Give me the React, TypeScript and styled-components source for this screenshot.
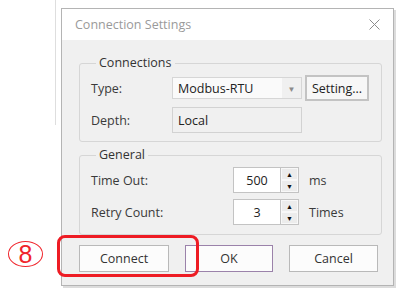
import { createGlobalStyle, styled } from 'styled-components';

const GlobalStyle = createGlobalStyle`
    html, body {
        margin: 0;
        padding: 0;
        background: #ffffff;
    }
    body {
        font-family: "Open Sans", "Liberation Sans", sans-serif;
        font-size: 12px;
        color: #333333;
    }
`;

const Page = styled.div`
    width: 400px;
    height: 290px;
    display: flex;
    flex-direction: row;
    overflow: hidden;
`;

const Side = styled.div`
    width: 61px;
    display: flex;
    flex-direction: column;
`;

const BackEdge = styled.div`
    width: 55px;
    height: 125px;
    border-right: 1px solid #dedede;
`;

const StepBadge = styled.span`
    margin: 116px 0 0 8px;
    width: 33px;
    height: 24px;
    border: 1.5px solid #f0252c;
    border-radius: 50%;
    color: #f0252c;
    font-family: "Liberation Sans", sans-serif;
    font-size: 25px;
    line-height: 24px;
    text-align: center;
`;

const Dialog = styled.div`
    margin-top: 8px;
    width: 331px;
    height: 276px;
    border: 1px solid #b4b4b4;
    box-shadow: 2px 2px 0 #dcdcdc;
    display: flex;
    flex-direction: column;
    background: #f0f0f0;
`;

const TitleBar = styled.div`
    height: 31px;
    background: #ffffff;
    display: flex;
    align-items: center;
    justify-content: space-between;
    padding: 0 13px 0 13px;
    color: #9a9a9a;
    font-size: 12.5px;
`;

const Body = styled.div`
    flex: 1;
    display: flex;
    flex-direction: column;
    padding: 15px 11px 0 17px;
`;

const Group = styled.fieldset<{ $gapTop?: number; $padBottom?: number }>`
    margin: ${p => p.$gapTop ?? 0}px 0 0 0;
    padding: 4px 10px ${p => p.$padBottom ?? 8}px 11px;
    border: 1px solid #d6d6d6;
    border-radius: 3px;
    display: flex;
    flex-direction: column;
    gap: 6px;
    min-width: 0;
`;

const Legend = styled.legend`
    padding: 0 3px;
    margin-left: 5px;
    font-size: 12.5px;
    line-height: 16px;
    color: #333333;
`;

const Row = styled.div`
    height: 26px;
    display: flex;
    align-items: center;
`;

const Label = styled.span<{ $w: number }>`
    width: ${p => p.$w}px;
    flex-shrink: 0;
    font-size: 12.5px;
    color: #3a3a3a;
`;

const Combo = styled.div`
    width: 128px;
    height: 20px;
    border: 1px solid #d6d6d6;
    background: #fafafa;
    display: flex;
    align-items: center;
    font-size: 12.5px;
    color: #222222;
`;

const ComboText = styled.span`
    flex: 1;
    padding-left: 5px;
`;

const ComboArrow = styled.span`
    width: 19px;
    height: 100%;
    background: #f0f0f0;
    color: #8a8a8a;
    font-size: 8px;
    display: flex;
    align-items: center;
    justify-content: center;
`;

const ReadOnlyBox = styled.div`
    width: 130px;
    height: 26px;
    box-sizing: border-box;
    border: 1px solid #d2d2d2;
    background: #f0f0f0;
    display: flex;
    align-items: center;
    padding-left: 5px;
    font-size: 12.5px;
    color: #222222;
`;

const Button = styled.button<{ $w: number; $h?: number; $focus?: boolean }>`
    width: ${p => p.$w}px;
    height: ${p => p.$h ?? 27}px;
    border: 1px solid ${p => (p.$focus ? '#9b82aa' : '#b9b9b9')};
    background: #fcfcfc;
    font-family: inherit;
    font-size: 12.5px;
    color: #333333;
    padding: 0;
    box-sizing: border-box;
`;

const SettingButton = styled(Button)`
    margin-left: 3px;
    border: 2px solid #c3c3c3;
    background: #f7f7f7;
    color: #222222;
`;

const Spin = styled.div`
    display: flex;
    height: 26px;
    border: 1px solid #c3c3c3;
    box-sizing: border-box;
    width: 66px;
`;

const SpinValue = styled.span`
    flex: 1;
    background: #ffffff;
    display: flex;
    align-items: center;
    justify-content: center;
    font-size: 12.5px;
    color: #222222;
`;

const SpinArrows = styled.div`
    width: 17px;
    display: flex;
    flex-direction: column;
    border-left: 1px solid #c3c3c3;
`;

const SpinArrow = styled.span`
    flex: 1;
    background: #ececec;
    border: 1px solid #f8f8f8;
    display: flex;
    align-items: center;
    justify-content: center;
    font-size: 7px;
    color: #111111;
`;

const Unit = styled.span`
    margin-left: 10px;
    font-size: 12.5px;
    color: #3a3a3a;
`;

const ButtonRow = styled.div`
    position: relative;
    margin-top: 10px;
    display: flex;
    gap: 16px;
`;

const Highlight = styled.div`
    position: absolute;
    left: -22px;
    top: -10px;
    width: 136px;
    height: 36px;
    border: 3px solid #ee1c24;
    border-radius: 8px;
    pointer-events: none;
`;

function SpinBox({ value }: { value: number }) {
    return (
        <Spin>
            <SpinValue>{value}</SpinValue>
            <SpinArrows>
                <SpinArrow>▲</SpinArrow>
                <SpinArrow>▼</SpinArrow>
            </SpinArrows>
        </Spin>
    );
}

export default function App() {
    return (
        <Page>
            <GlobalStyle />
            <Side>
                <BackEdge />
                <StepBadge>8</StepBadge>
            </Side>
            <Dialog>
                <TitleBar>
                    <span>Connection Settings</span>
                    <svg width="11" height="11" viewBox="0 0 11 11">
                        <path d="M0.5 0.5 L10.5 10.5 M10.5 0.5 L0.5 10.5" stroke="#8c8c8c" strokeWidth="1" />
                    </svg>
                </TitleBar>
                <Body>
                    <Group>
                        <Legend>Connections</Legend>
                        <Row>
                            <Label $w={81}>Type:</Label>
                            <Combo>
                                <ComboText>Modbus-RTU</ComboText>
                                <ComboArrow>▼</ComboArrow>
                            </Combo>
                            <SettingButton $w={64} $h={26}>Setting...</SettingButton>
                        </Row>
                        <Row>
                            <Label $w={81}>Depth:</Label>
                            <ReadOnlyBox>Local</ReadOnlyBox>
                        </Row>
                    </Group>
                    <Group $gapTop={5} $padBottom={9}>
                        <Legend>General</Legend>
                        <Row>
                            <Label $w={142}>Time Out:</Label>
                            <SpinBox value={500} />
                            <Unit>ms</Unit>
                        </Row>
                        <Row>
                            <Label $w={142}>Retry Count:</Label>
                            <SpinBox value={3} />
                            <Unit>Times</Unit>
                        </Row>
                    </Group>
                    <ButtonRow>
                        <Button $w={90}>Connect</Button>
                        <Button $w={88} $focus>OK</Button>
                        <Button $w={89}>Cancel</Button>
                        <Highlight />
                    </ButtonRow>
                </Body>
            </Dialog>
        </Page>
    );
}
